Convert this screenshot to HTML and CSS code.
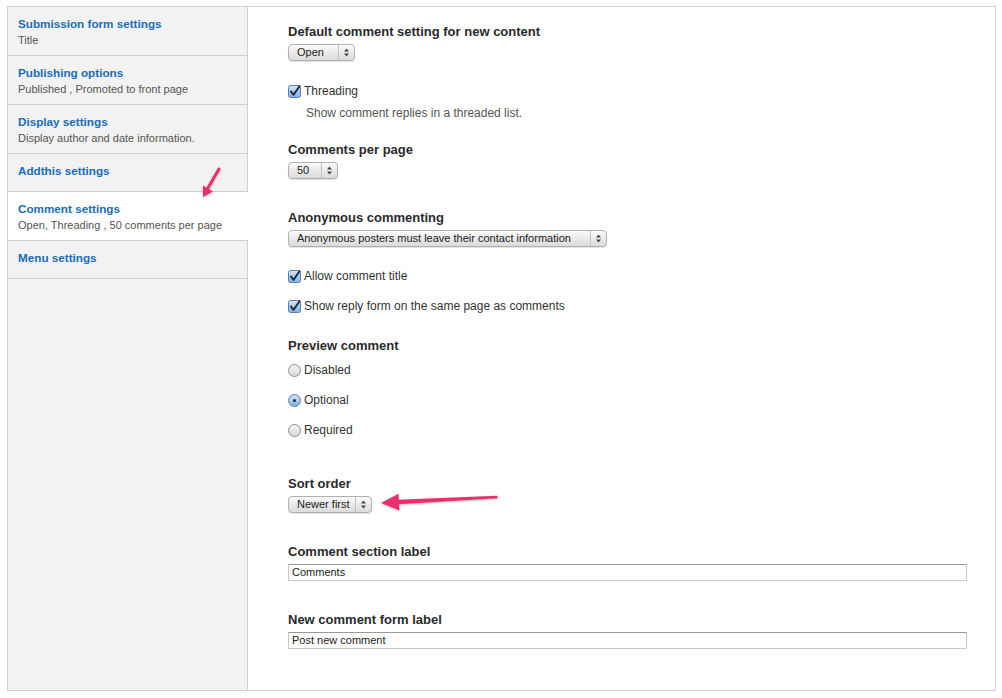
FILE: index.html
```html
<!DOCTYPE html>
<html>
<head>
<meta charset="utf-8">
<link rel="stylesheet" href="styles.css">
</head>
<body>
<div class="frame">
  <ul class="tabs">
    <li class="tab"><a class="tab-title">Submission form settings</a><div class="tab-sum">Title</div></li>
    <li class="tab"><a class="tab-title">Publishing options</a><div class="tab-sum">Published , Promoted to front page</div></li>
    <li class="tab"><a class="tab-title">Display settings</a><div class="tab-sum">Display author and date information.</div></li>
    <li class="tab tab-nosum"><a class="tab-title">Addthis settings</a></li>
    <li class="tab tab-active"><a class="tab-title">Comment settings</a><div class="tab-sum">Open, Threading , 50 comments per page</div></li>
    <li class="tab tab-nosum"><a class="tab-title">Menu settings</a></li>
  </ul>

  <div class="content">
    <div class="item">
      <div class="label">Default comment setting for new content</div>
      <span class="select sel-status"><span class="sel-val">Open</span><span class="sel-arr"><svg width="5" height="9" viewBox="0 0 5 9"><path d="M2.5 0.5 L5 3.5 L0 3.5Z M2.5 8.5 L5 5.5 L0 5.5Z" fill="#444"/></svg></span></span>
    </div>

    <div class="item gap-22">
      <div class="check"><span class="cb"><svg width="13" height="13" viewBox="0 0 13 13"><defs><linearGradient id="g1" x1="0" y1="0" x2="0" y2="1"><stop offset="0" stop-color="#d5e6f7"/><stop offset="1" stop-color="#7fb1e3"/></linearGradient></defs><rect x="0.5" y="0.5" width="12" height="12" rx="2" fill="url(#g1)" stroke="#5b7fa8"/><path d="M3 6.5 L5.6 9.8 L11.5 1.2" fill="none" stroke="#1b2a3d" stroke-width="2" stroke-linecap="round" stroke-linejoin="round"/></svg></span>Threading</div>
      <div class="desc">Show comment replies in a threaded list.</div>
    </div>

    <div class="item gap-21">
      <div class="label">Comments per page</div>
      <span class="select sel-count"><span class="sel-val">50</span><span class="sel-arr"><svg width="5" height="9" viewBox="0 0 5 9"><path d="M2.5 0.5 L5 3.5 L0 3.5Z M2.5 8.5 L5 5.5 L0 5.5Z" fill="#444"/></svg></span></span>
    </div>

    <div class="item gap-31">
      <div class="label">Anonymous commenting</div>
      <span class="select sel-anon"><span class="sel-val">Anonymous posters must leave their contact information</span><span class="sel-arr"><svg width="5" height="9" viewBox="0 0 5 9"><path d="M2.5 0.5 L5 3.5 L0 3.5Z M2.5 8.5 L5 5.5 L0 5.5Z" fill="#444"/></svg></span></span>
    </div>

    <div class="item gap-21">
      <div class="check"><span class="cb"><svg width="13" height="13" viewBox="0 0 13 13"><defs><linearGradient id="g2" x1="0" y1="0" x2="0" y2="1"><stop offset="0" stop-color="#d5e6f7"/><stop offset="1" stop-color="#7fb1e3"/></linearGradient></defs><rect x="0.5" y="0.5" width="12" height="12" rx="2" fill="url(#g2)" stroke="#5b7fa8"/><path d="M3 6.5 L5.6 9.8 L11.5 1.2" fill="none" stroke="#1b2a3d" stroke-width="2" stroke-linecap="round" stroke-linejoin="round"/></svg></span>Allow comment title</div>
    </div>

    <div class="item gap-14">
      <div class="check"><span class="cb"><svg width="13" height="13" viewBox="0 0 13 13"><defs><linearGradient id="g3" x1="0" y1="0" x2="0" y2="1"><stop offset="0" stop-color="#d5e6f7"/><stop offset="1" stop-color="#7fb1e3"/></linearGradient></defs><rect x="0.5" y="0.5" width="12" height="12" rx="2" fill="url(#g3)" stroke="#5b7fa8"/><path d="M3 6.5 L5.6 9.8 L11.5 1.2" fill="none" stroke="#1b2a3d" stroke-width="2" stroke-linecap="round" stroke-linejoin="round"/></svg></span>Show reply form on the same page as comments</div>
    </div>

    <div class="item gap-24">
      <div class="label">Preview comment</div>
      <div class="radios">
        <div class="radio"><span class="rb"></span>Disabled</div>
        <div class="radio"><span class="rb rb-on"></span>Optional</div>
        <div class="radio"><span class="rb"></span>Required</div>
      </div>
    </div>

    <div class="item gap-38">
      <div class="label">Sort order</div>
      <span class="select sel-sort"><span class="sel-val">Newer first</span><span class="sel-arr"><svg width="5" height="9" viewBox="0 0 5 9"><path d="M2.5 0.5 L5 3.5 L0 3.5Z M2.5 8.5 L5 5.5 L0 5.5Z" fill="#444"/></svg></span></span>
    </div>

    <div class="item gap-31">
      <div class="label">Comment section label</div>
      <div class="text">Comments</div>
    </div>

    <div class="item gap-31">
      <div class="label">New comment form label</div>
      <div class="text">Post new comment</div>
    </div>
  </div>

  <svg class="arrow arrow-tab" width="30" height="40" viewBox="0 0 30 40">
    <line x1="24" y1="6" x2="12.6" y2="25.5" stroke="#ea2f6c" stroke-width="3" stroke-linecap="round"/>
    <polygon points="8,34 18,28.5 8,22.5" fill="#ea2f6c"/>
  </svg>
  <svg class="arrow arrow-sort" width="130" height="26" viewBox="0 0 130 26">
    <polygon points="122,7.8 123,10.2 23,16.2 22.5,11.8" fill="#ea2f6c"/>
    <polygon points="6,15 24.4,22.5 23.5,5.8" fill="#ea2f6c"/>
  </svg>
</div>
</body>
</html>
```

FILE: styles.css
```css
* { box-sizing: border-box; }
html, body { margin: 0; padding: 0; background: #fff; }
body {
  font-family: "Liberation Sans", Arial, Helvetica, sans-serif;
  color: #333;
}
.frame {
  position: relative;
  margin: 6px 0 0 7px;
  width: 989px;
  height: 685px;
  border: 1px solid #cfcfcf;
  display: flex;
}
.tabs {
  list-style: none;
  margin: 0;
  padding: 0;
  width: 240px;
  flex: 0 0 240px;
  background: #f2f2f2;
  border-right: 1px solid #cfcfcf;
}
.tab {
  padding: 9px 10px 6px 10px;
  border-bottom: 1px solid #cfcfcf;
}
.tab-nosum { padding-bottom: 12px; }
.tab-active {
  background: #fff;
  margin-right: -1px;
  position: relative;
}
.tab-title {
  display: block;
  font-size: 11.7px;
  font-weight: bold;
  line-height: 16px;
  color: #1a6db8;
}
.tab-sum {
  font-size: 11px;
  line-height: 17px;
  color: #555;
}
.content {
  flex: 1;
  padding: 17px 28px 0 40px;
}
.label {
  font-size: 13px;
  font-weight: bold;
  line-height: 16px;
  color: #2a2a2a;
  margin-bottom: 4px;
}
.gap-14 { margin-top: 14px; }
.gap-21 { margin-top: 21px; }
.gap-22 { margin-top: 22px; }
.gap-24 { margin-top: 24px; }
.gap-31 { margin-top: 31px; }
.gap-32 { margin-top: 32px; }
.gap-38 { margin-top: 38px; }
.select {
  display: flex;
  height: 17px;
  border: 1px solid #b0b0b0;
  border-radius: 4px;
  background: linear-gradient(#fbfbfb, #e6e6e6 60%, #dcdcdc);
  box-shadow: 0 1px 1px rgba(0,0,0,0.12);
  font-size: 11px;
  line-height: 15px;
  color: #222;
}
.sel-val {
  flex: 1;
  padding-left: 8px;
  white-space: nowrap;
  overflow: hidden;
}
.sel-arr {
  width: 16px;
  border-left: 1px solid #c2c2c2;
  display: flex;
  align-items: center;
  justify-content: center;
}
.sel-status { width: 67px; }
.sel-count { width: 50px; }
.sel-anon { width: 319px; }
.sel-sort { width: 84px; }
.check, .radio {
  display: flex;
  align-items: center;
  font-size: 12px;
  line-height: 16px;
  color: #333;
}
.cb {
  width: 13px;
  height: 13px;
  margin-right: 3px;
  display: flex;
}
.desc {
  margin-top: 6px;
  padding-left: 18px;
  font-size: 12px;
  line-height: 16px;
  color: #555;
}
.radios {
  display: flex;
  flex-direction: column;
  gap: 14px;
  padding-top: 4px;
}
.rb {
  width: 13px;
  height: 13px;
  border-radius: 50%;
  border: 1px solid #8d8d8d;
  background: linear-gradient(#f4f4f4, #d9d9d9);
  margin-right: 3px;
  position: relative;
}
.rb-on {
  border-color: #5b7fa8;
  background: linear-gradient(#d5e6f7, #7fb1e3);
}
.rb-on::after {
  content: "";
  position: absolute;
  left: 4px;
  top: 4px;
  width: 3px;
  height: 3px;
  border-radius: 50%;
  background: #1b2a3d;
}
.text {
  width: 679px;
  height: 17px;
  border: 1px solid #c8c8c8;
  border-top-color: #9a9a9a;
  font-size: 11px;
  line-height: 15px;
  padding-left: 3px;
  color: #222;
}
.arrow {
  position: absolute;
  filter: drop-shadow(0 1px 1px rgba(0,0,0,0.25));
}
.arrow-tab { left: 187px; top: 156px; }
.arrow-sort { left: 367px; top: 481px; }
```
